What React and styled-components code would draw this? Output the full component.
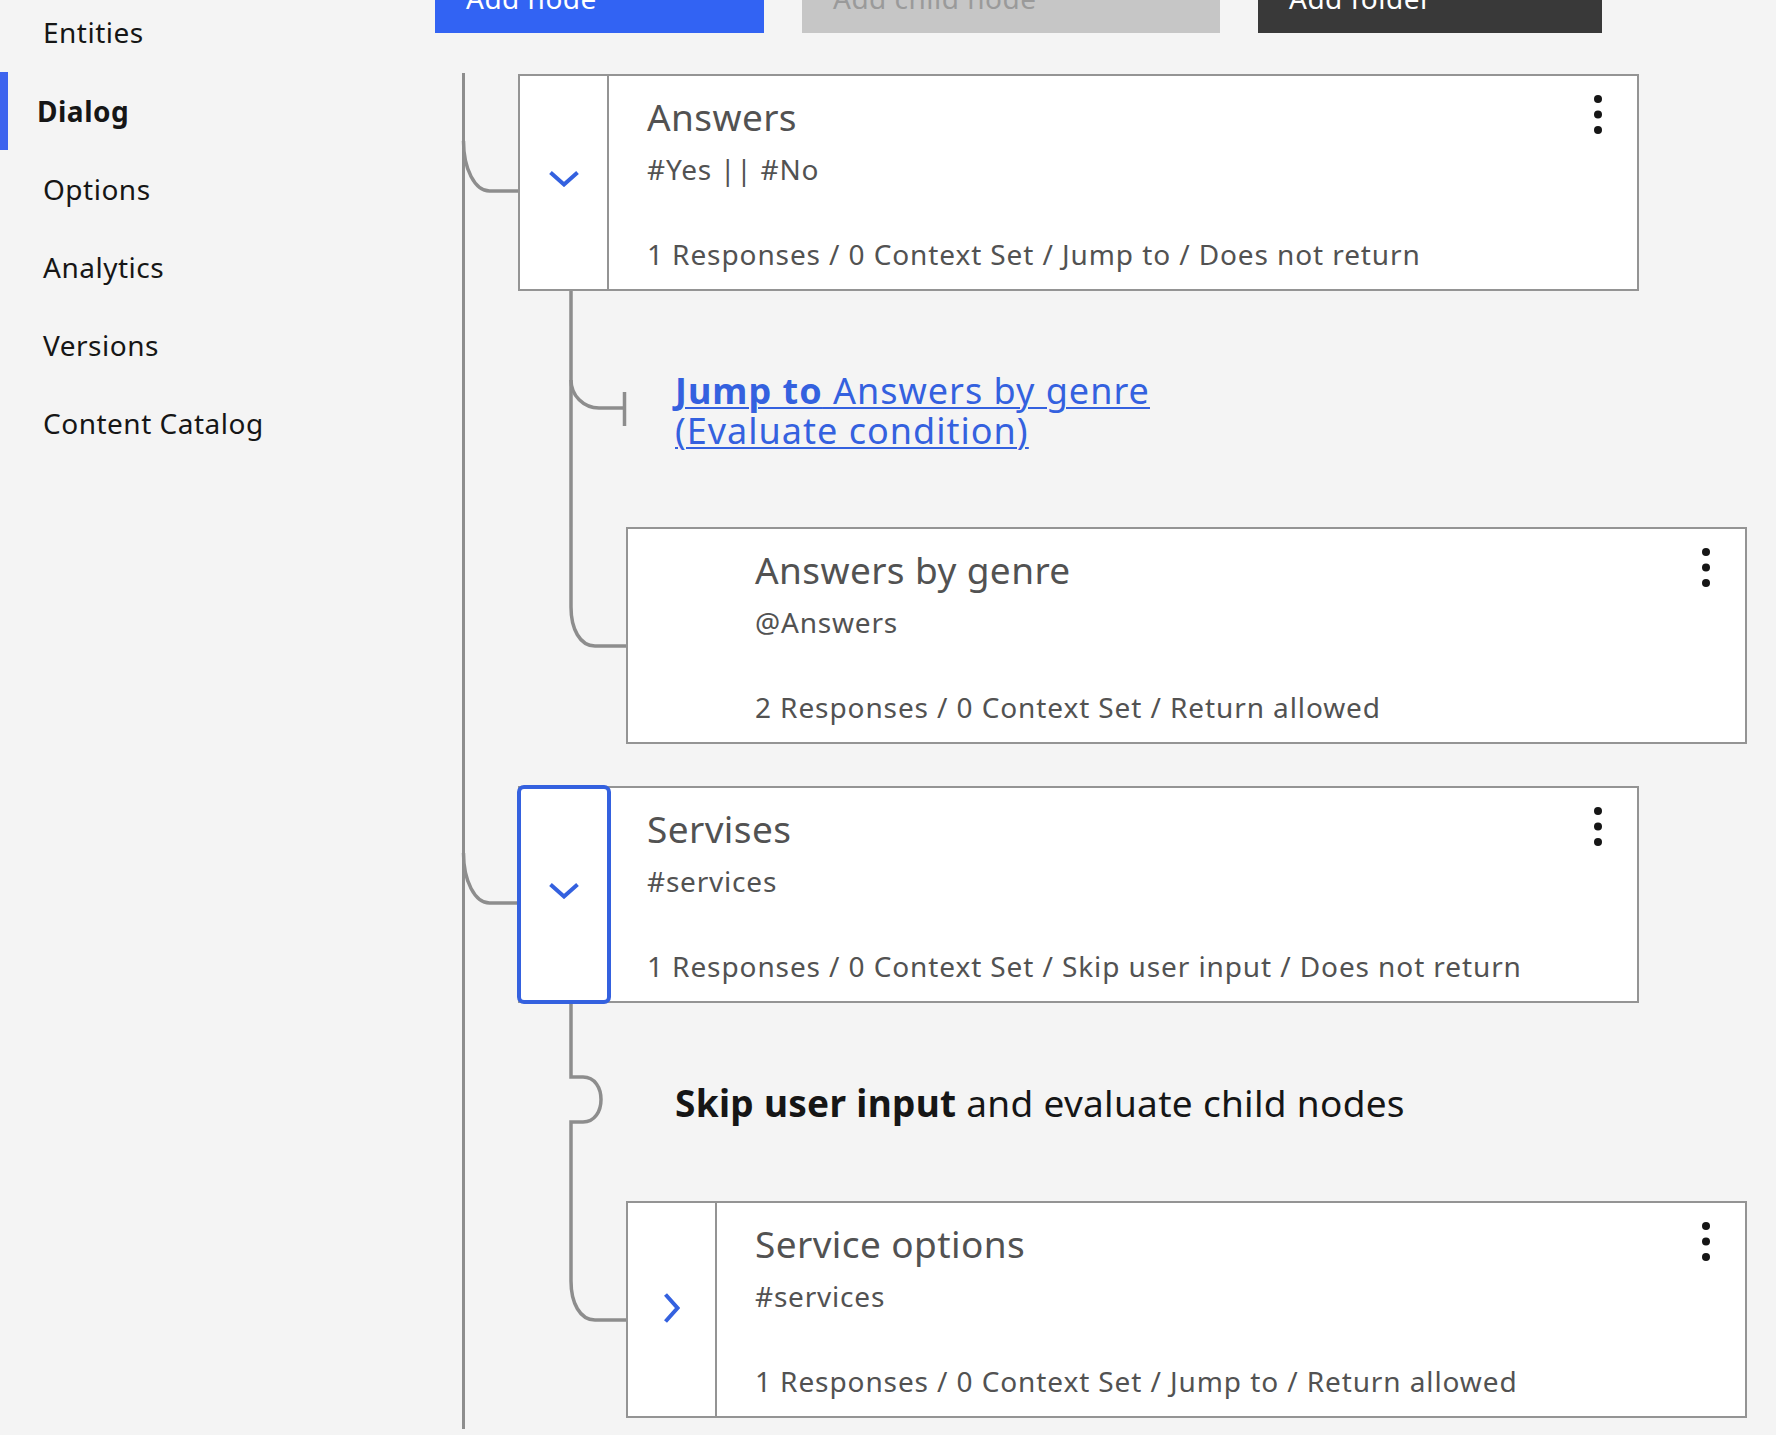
import React from 'react'
import styled, { createGlobalStyle, css } from 'styled-components'

const LINE = '#8d8d8d'
const BLUE = '#3461df'

const GlobalStyle = createGlobalStyle`
    html, body {
        margin: 0;
        padding: 0;
        background: #f4f4f4;
    }
    body {
        font-family: "Noto Sans", "Open Sans", sans-serif;
        color: #161616;
        overflow: hidden;
    }
`;

const navItems = ['Entities', 'Dialog', 'Options', 'Analytics', 'Versions', 'Content Catalog']

function Chevron({ dir }) {
    if (dir === 'right') {
        return (
            <RightIcon width="17" height="32" viewBox="0 0 17 32">
                <polyline points="2.5,2.5 14.5,16 2.5,29.5" fill="none" stroke={BLUE} strokeWidth="4" />
            </RightIcon>
        )
    }
    return (
        <DownIcon width="32" height="17" viewBox="0 0 32 17">
            <polyline points="2.5,2.5 16,14.5 29.5,2.5" fill="none" stroke={BLUE} strokeWidth="4" />
        </DownIcon>
    )
}

function Kebab() {
    return (
        <KebabButton width="8" height="40" viewBox="0 0 8 40">
            <circle cx="4" cy="4" r="4" fill="#161616" />
            <circle cx="4" cy="19.5" r="4" fill="#161616" />
            <circle cx="4" cy="35" r="4" fill="#161616" />
        </KebabButton>
    )
}

function NodeCard({ title, condition, summary, chevron, divider, focused }) {
    return (
        <Card>
            <Toggle $divider={divider} $focused={focused}>
                {chevron && <Chevron dir={chevron} />}
            </Toggle>
            <CardBody>
                <CardTitle>{title}</CardTitle>
                <Condition>{condition}</Condition>
                <Summary>{summary}</Summary>
            </CardBody>
            <Kebab />
        </Card>
    )
}

// connector drawings, one per row of the tree
function TopCurve() {
    return (
        <svg width="53" height="217" overflow="visible">
            <path d="M-1.5 67 C-1.5 95 10 117 24.5 117 H53" fill="none" stroke={LINE} strokeWidth="3.5" />
        </svg>
    )
}

function LastChildCurve() {
    return (
        <svg width="161" height="217" overflow="visible">
            <path d="M106 0 V80 C106 102 115 119 130 119 H161" fill="none" stroke={LINE} strokeWidth="3.5" />
        </svg>
    )
}

function JumpCurve() {
    return (
        <svg width="161" height="236" overflow="visible">
            <path d="M106 0 V236" fill="none" stroke={LINE} strokeWidth="3.5" />
            <path d="M106 89 C106 104.5 118.5 117 134 117 H159" fill="none" stroke={LINE} strokeWidth="3.5" />
            <path d="M159.5 101 V135" fill="none" stroke={LINE} strokeWidth="3.5" />
        </svg>
    )
}

function SkipCurve() {
    return (
        <svg width="161" height="198" overflow="visible">
            <path
                d="M106 0 V74 H118 C130 74 136 85 136 96.5 C136 108 130 119 118 119 H106 V198"
                fill="none"
                stroke={LINE}
                strokeWidth="3.5"
            />
        </svg>
    )
}

function App() {
    return (
        <>
            <GlobalStyle />
            <Page>
                <Sidebar>
                    {navItems.map((item) => (
                        <NavItem key={item} $active={item === 'Dialog'}>{item}</NavItem>
                    ))}
                </Sidebar>
                <Main>
                    <Toolbar>
                        <ActionButton $kind="primary" $width={329}>Add node</ActionButton>
                        <ActionButton $kind="disabled" $width={418}>Add child node</ActionButton>
                        <ActionButton $kind="dark" $width={344}>Add folder</ActionButton>
                    </Toolbar>

                    <Tree>
                        <Branch>
                            <Row>
                                <Gutter $width={53}><TopCurve /></Gutter>
                                <NodeCard
                                    title="Answers"
                                    condition="#Yes || #No"
                                    summary="1 Responses / 0 Context Set / Jump to / Does not return"
                                    chevron="down"
                                    divider
                                />
                            </Row>
                            <Row $height={236}>
                                <Gutter $width={161}><JumpCurve /></Gutter>
                                <JumpLink href="#">
                                    <LinkLine><strong>Jump to</strong> Answers by genre</LinkLine>
                                    <LinkLine>(Evaluate condition)</LinkLine>
                                </JumpLink>
                            </Row>
                            <Row>
                                <Gutter $width={161}><LastChildCurve /></Gutter>
                                <NodeCard
                                    title="Answers by genre"
                                    condition="@Answers"
                                    summary="2 Responses / 0 Context Set / Return allowed"
                                />
                            </Row>
                        </Branch>

                        <Branch>
                            <Row>
                                <Gutter $width={53}><TopCurve /></Gutter>
                                <NodeCard
                                    title="Servises"
                                    condition="#services"
                                    summary="1 Responses / 0 Context Set / Skip user input / Does not return"
                                    chevron="down"
                                    focused
                                />
                            </Row>
                            <Row $height={198}>
                                <Gutter $width={161}><SkipCurve /></Gutter>
                                <SkipNote>
                                    <strong>Skip user input</strong> and evaluate child nodes
                                </SkipNote>
                            </Row>
                            <Row>
                                <Gutter $width={161}><LastChildCurve /></Gutter>
                                <NodeCard
                                    title="Service options"
                                    condition="#services"
                                    summary="1 Responses / 0 Context Set / Jump to / Return allowed"
                                    chevron="right"
                                    divider
                                />
                            </Row>
                        </Branch>
                    </Tree>
                </Main>
            </Page>
        </>
    )
}

const Page = styled.div`
    display: flex;
    height: 1435px;
    overflow: hidden;
    background: #f4f4f4;
`;

const Sidebar = styled.nav`
    width: 435px;
    flex-shrink: 0;
    margin-top: -7px;
    display: flex;
    flex-direction: column;
`;

const NavItem = styled.div`
    height: 78px;
    display: flex;
    align-items: center;
    box-sizing: border-box;
    padding-left: 43px;
    font-size: 28px;
    letter-spacing: 0.5px;
    color: #161616;

    ${(p) => p.$active && css`
        border-left: 8px solid #3e64ee;
        padding-left: 29px;
        font-weight: 700;
        margin-top: 1px;
    `}
`;

const Main = styled.main`
    flex: 1;
    display: flex;
    flex-direction: column;
`;

const Toolbar = styled.div`
    display: flex;
    gap: 38px;
    margin-top: -27px;
`;

const ActionButton = styled.button`
    width: ${(p) => p.$width}px;
    height: 60px;
    border: none;
    padding: 7px 31px 0;
    text-align: left;
    font-family: inherit;
    font-size: 28px;
    line-height: 36px;
    letter-spacing: 0.5px;
    align-self: flex-start;
    display: flex;
    align-items: flex-start;

    ${(p) => p.$kind === 'primary' && css`
        background: #3263f3;
        color: #ffffff;
    `}
    ${(p) => p.$kind === 'disabled' && css`
        background: #c6c6c6;
        color: #9a9a9a;
    `}
    ${(p) => p.$kind === 'dark' && css`
        background: #393939;
        color: #ffffff;
    `}
`;

const Tree = styled.div`
    margin: 40px 0 0 27px;
    padding: 1px 0 11px;
    border-left: 3.5px solid ${LINE};
    display: flex;
    flex-direction: column;
    gap: 42px;
    align-self: flex-start;
`;

const Branch = styled.div`
    display: flex;
    flex-direction: column;
`;

const Row = styled.div`
    display: flex;
    align-items: flex-start;
    ${(p) => p.$height && css`height: ${p.$height}px;`}
`;

const Gutter = styled.div`
    width: ${(p) => p.$width}px;
    flex-shrink: 0;
    display: flex;
`;

const Card = styled.div`
    display: flex;
    width: 1121px;
    height: 217px;
    box-sizing: border-box;
    background: #ffffff;
    border: 2px solid #949494;
`;

const Toggle = styled.div`
    width: 87px;
    flex-shrink: 0;
    border-right: 2px solid ${(p) => (p.$divider ? '#949494' : 'transparent')};
    display: flex;
    align-items: center;
    justify-content: center;
    position: relative;

    ${(p) => p.$focused && css`
        &::after {
            content: '';
            position: absolute;
            inset: -3px -4px -3px -3px;
            border: 4px solid ${BLUE};
            border-radius: 7px;
        }
    `}
`;

const DownIcon = styled.svg`
    margin-bottom: 8px;
`;

const RightIcon = styled.svg`
    margin-bottom: 4px;
`;

const CardBody = styled.div`
    flex: 1;
    display: flex;
    flex-direction: column;
    padding: 19px 0 17px 38px;
    color: #525252;
`;

const CardTitle = styled.div`
    font-size: 37px;
    line-height: 44px;
    letter-spacing: 0.4px;
`;

const Condition = styled.div`
    margin-top: 12px;
    font-size: 28px;
    line-height: 36px;
    letter-spacing: 0.8px;
`;

const Summary = styled.div`
    margin-top: auto;
    font-size: 28px;
    line-height: 36px;
    letter-spacing: 0.9px;
`;

const KebabButton = styled.svg`
    flex-shrink: 0;
    margin: 19px 35px 0 0;
`;

const JumpLink = styled.a`
    display: flex;
    flex-direction: column;
    margin: 80px 0 0 49px;
    font-size: 36px;
    line-height: 40px;
    letter-spacing: 1px;
    color: ${BLUE};
    text-decoration: underline;
    text-decoration-thickness: 2px;
    text-underline-offset: 3px;
`;

const LinkLine = styled.span`
    display: block;
    height: 40px;
    text-decoration: inherit;
`;

const SkipNote = styled.p`
    margin: 78px 0 0 49px;
    font-size: 37px;
    line-height: 44px;
    letter-spacing: 0.3px;
    color: #161616;

    strong {
        font-weight: 700;
    }
`;

export default App
